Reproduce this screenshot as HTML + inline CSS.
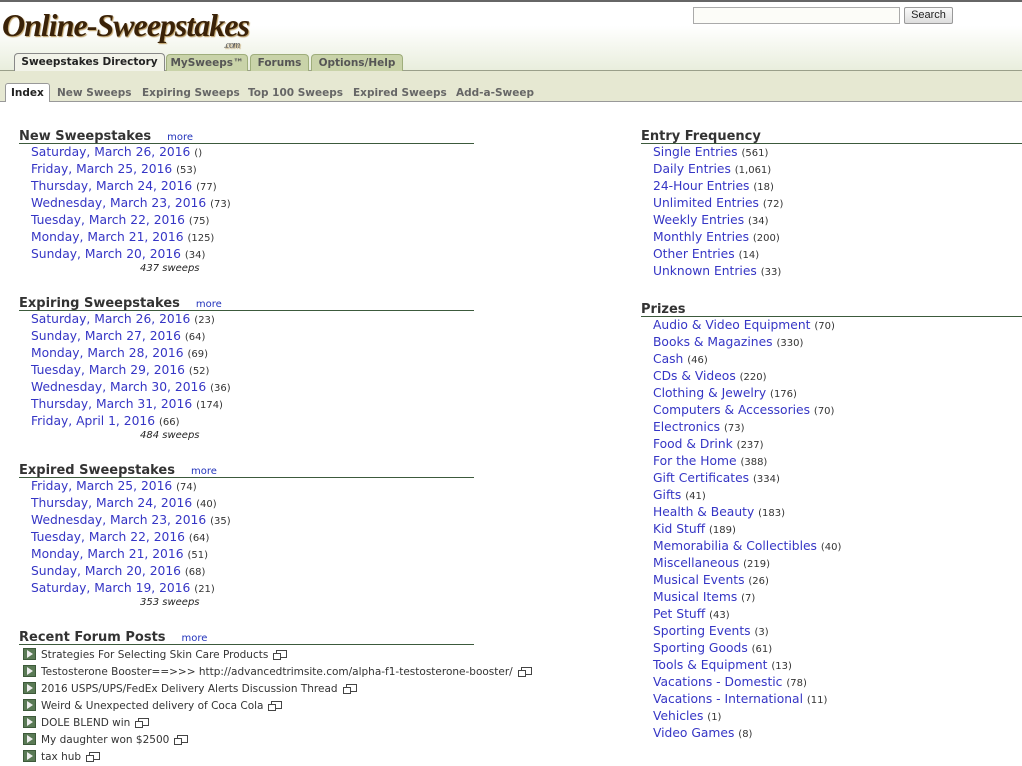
<!DOCTYPE html>
<html><head><meta charset="utf-8"><style>
*{margin:0;padding:0;box-sizing:border-box}
body{width:1022px;height:757px;overflow:hidden;background:#fff;font-family:"DejaVu Sans",Verdana,sans-serif;position:relative}
#top{position:absolute;left:0;top:0;width:1022px;height:71px;border-top:2px solid #666;background:linear-gradient(#fff 0,#fff 35%,#e9eedd 100%);border-bottom:1px solid #9a9f8a}
#logo{position:absolute;left:2px;top:5px;font-family:"Liberation Serif",serif;font-style:italic;font-weight:bold;font-size:32px;color:#3a2208;letter-spacing:-1px;transform:scaleX(1.0);transform-origin:left;text-shadow:1px 1px 1px #b89a60}
#logo small{position:absolute;left:222px;top:33px;font-size:10px;color:#555;font-weight:normal}
#sq{position:absolute;left:693px;top:5px;width:207px;height:17px;border:1px solid #aaa;background:#fcfcf8}
#sb{position:absolute;left:904px;top:5px;width:49px;height:17px;border:1px solid #999;border-radius:2px;background:linear-gradient(#fafafa,#ddd);font:11px "Liberation Sans",sans-serif;text-align:center;line-height:15px;color:#222}
.tab{position:absolute;top:52px;height:19px;font-size:10.5px;font-weight:bold;color:#555;background:#c9d3a9;border:1px solid #9fae7c;border-bottom:none;border-radius:4px 4px 0 0;text-align:center;line-height:17px}
.tab.on{background:#f2f3e9;color:#222;top:51px;height:21px;border-color:#888}
#sub{position:absolute;left:0;top:71px;width:1022px;height:31px;background:#e6e8d2;border-bottom:1px solid #999}
.st{position:absolute;top:16px;font-size:10.5px;font-weight:bold;color:#666}
.st.on{background:#fff;border:1px solid #999;border-bottom:none;border-radius:3px 3px 0 0;color:#222;top:12px;height:19px;padding:0 5px;line-height:18px;left:5px}
h2{position:absolute;font-size:13px;font-weight:bold;color:#333;height:17px;line-height:19px;border-bottom:1px solid #3c5a3c}
h2 a{font-size:10px;font-weight:normal;color:#2233bb;margin-left:16px}
.l{position:absolute;font-size:12.3px;color:#3535c5;line-height:17px;white-space:nowrap}
.l i{font-style:normal;font-size:10px;color:#333;line-height:0}
.sw{position:absolute;font-size:10px;font-style:italic;color:#222;line-height:12px}
.fp{position:absolute;left:23px;font-size:10.5px;color:#333;line-height:17px;white-space:nowrap}
.fp b{display:inline-block;width:13px;height:12px;background:#5a7a55;border:1px solid #3d5a3a;vertical-align:-2px;margin-right:5px;position:relative}
.fp b:after{content:"";position:absolute;left:3px;top:1px;border-left:6px solid #eee;border-top:4px solid transparent;border-bottom:4px solid transparent}
.fp s{display:inline-block;width:11px;height:8px;border:1px solid #444;margin-left:8px;text-decoration:none;position:relative;vertical-align:0}
.fp s:before{content:"";position:absolute;left:-4px;top:2px;width:6px;height:5px;border:1px solid #444;background:#fff}
</style></head><body>
<div id="top">
<div id="logo">Online-Sweepstakes<small>.com</small></div>
<div id="sq"></div><div id="sb">Search</div>
<div class="tab on" style="left:14px;width:151px">Sweepstakes Directory</div>
<div class="tab" style="left:166px;width:82px">MySweeps™</div>
<div class="tab" style="left:250px;width:59px">Forums</div>
<div class="tab" style="left:311px;width:92px">Options/Help</div>
</div>
<div id="sub">
<div class="st on">Index</div>
<div class="st" style="left:57px">New Sweeps</div>
<div class="st" style="left:142px">Expiring Sweeps</div>
<div class="st" style="left:248px">Top 100 Sweeps</div>
<div class="st" style="left:353px">Expired Sweeps</div>
<div class="st" style="left:456px">Add-a-Sweep</div>
</div>

<h2 style="left:19px;top:127px;width:455px">New Sweepstakes<a>more</a></h2>
<div class="l" style="left:31px;top:144px">Saturday, March 26, 2016 <i>()</i><br>Friday, March 25, 2016 <i>(53)</i><br>Thursday, March 24, 2016 <i>(77)</i><br>Wednesday, March 23, 2016 <i>(73)</i><br>Tuesday, March 22, 2016 <i>(75)</i><br>Monday, March 21, 2016 <i>(125)</i><br>Sunday, March 20, 2016 <i>(34)</i></div>
<div class="sw" style="left:140px;top:263px">437 sweeps</div>

<h2 style="left:19px;top:294px;width:455px">Expiring Sweepstakes<a>more</a></h2>
<div class="l" style="left:31px;top:311px">Saturday, March 26, 2016 <i>(23)</i><br>Sunday, March 27, 2016 <i>(64)</i><br>Monday, March 28, 2016 <i>(69)</i><br>Tuesday, March 29, 2016 <i>(52)</i><br>Wednesday, March 30, 2016 <i>(36)</i><br>Thursday, March 31, 2016 <i>(174)</i><br>Friday, April 1, 2016 <i>(66)</i></div>
<div class="sw" style="left:140px;top:430px">484 sweeps</div>

<h2 style="left:19px;top:461px;width:455px">Expired Sweepstakes<a>more</a></h2>
<div class="l" style="left:31px;top:478px">Friday, March 25, 2016 <i>(74)</i><br>Thursday, March 24, 2016 <i>(40)</i><br>Wednesday, March 23, 2016 <i>(35)</i><br>Tuesday, March 22, 2016 <i>(64)</i><br>Monday, March 21, 2016 <i>(51)</i><br>Sunday, March 20, 2016 <i>(68)</i><br>Saturday, March 19, 2016 <i>(21)</i></div>
<div class="sw" style="left:140px;top:597px">353 sweeps</div>

<h2 style="left:19px;top:628px;width:455px">Recent Forum Posts<a>more</a></h2>
<div class="fp" style="top:647px"><b></b>Strategies For Selecting Skin Care Products<s></s></div>
<div class="fp" style="top:664px"><b></b>Testosterone Booster==&gt;&gt;&gt; http://advancedtrimsite.com/alpha-f1-testosterone-booster/<s></s></div>
<div class="fp" style="top:681px"><b></b>2016 USPS/UPS/FedEx Delivery Alerts Discussion Thread<s></s></div>
<div class="fp" style="top:698px"><b></b>Weird &amp; Unexpected delivery of Coca Cola<s></s></div>
<div class="fp" style="top:715px"><b></b>DOLE BLEND win<s></s></div>
<div class="fp" style="top:732px"><b></b>My daughter won $2500<s></s></div>
<div class="fp" style="top:749px"><b></b>tax hub<s></s></div>

<h2 style="left:641px;top:127px;width:381px">Entry Frequency</h2>
<div class="l" style="left:653px;top:144px">Single Entries <i>(561)</i><br>Daily Entries <i>(1,061)</i><br>24-Hour Entries <i>(18)</i><br>Unlimited Entries <i>(72)</i><br>Weekly Entries <i>(34)</i><br>Monthly Entries <i>(200)</i><br>Other Entries <i>(14)</i><br>Unknown Entries <i>(33)</i></div>

<h2 style="left:641px;top:300px;width:381px">Prizes</h2>
<div class="l" style="left:653px;top:317px">Audio &amp; Video Equipment <i>(70)</i><br>Books &amp; Magazines <i>(330)</i><br>Cash <i>(46)</i><br>CDs &amp; Videos <i>(220)</i><br>Clothing &amp; Jewelry <i>(176)</i><br>Computers &amp; Accessories <i>(70)</i><br>Electronics <i>(73)</i><br>Food &amp; Drink <i>(237)</i><br>For the Home <i>(388)</i><br>Gift Certificates <i>(334)</i><br>Gifts <i>(41)</i><br>Health &amp; Beauty <i>(183)</i><br>Kid Stuff <i>(189)</i><br>Memorabilia &amp; Collectibles <i>(40)</i><br>Miscellaneous <i>(219)</i><br>Musical Events <i>(26)</i><br>Musical Items <i>(7)</i><br>Pet Stuff <i>(43)</i><br>Sporting Events <i>(3)</i><br>Sporting Goods <i>(61)</i><br>Tools &amp; Equipment <i>(13)</i><br>Vacations - Domestic <i>(78)</i><br>Vacations - International <i>(11)</i><br>Vehicles <i>(1)</i><br>Video Games <i>(8)</i></div>
</body></html>
